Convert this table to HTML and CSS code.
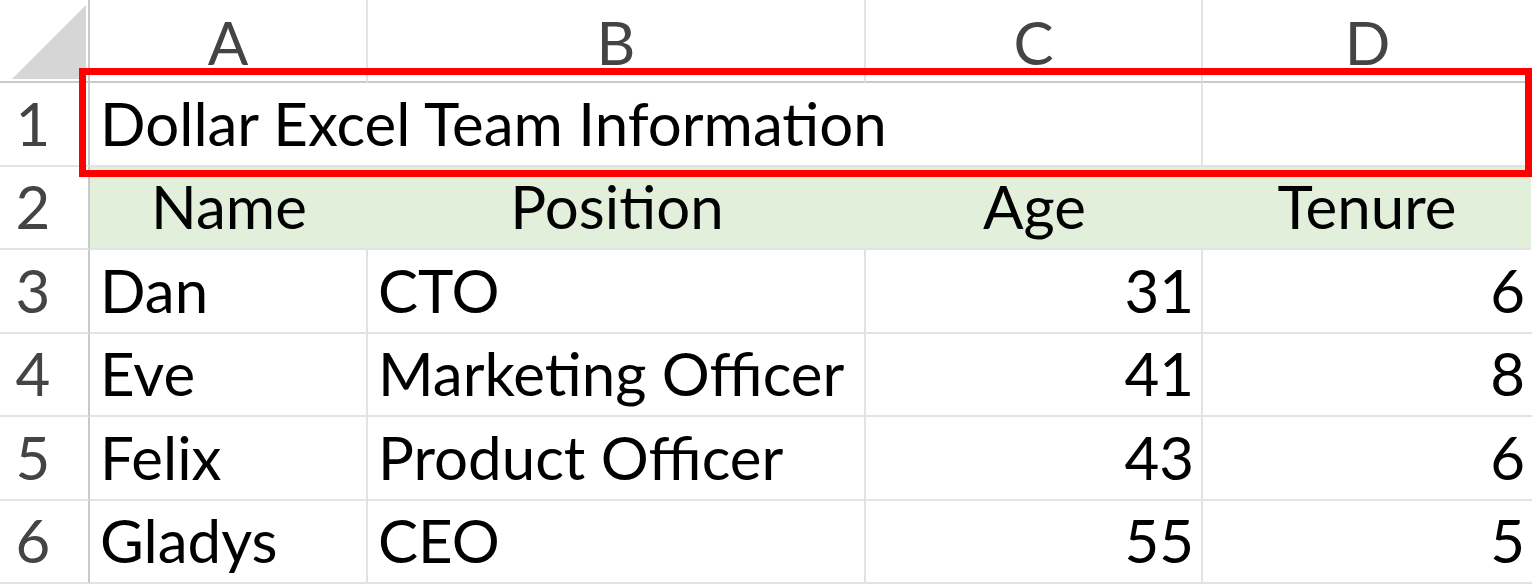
FILE: index.html
```html
<!DOCTYPE html>
<html>
<head>
<meta charset="utf-8">
<link rel="stylesheet" href="styles.css">
</head>
<body>
<div class="sheet">
  <div class="grid">
    <div class="corner"><svg class="tri" width="76" height="76" viewBox="0 0 76 76"><polygon points="1,75 75,1 75,75" fill="#d6d6d6"/></svg></div>
    <div class="colhead">A</div>
    <div class="colhead">B</div>
    <div class="colhead">C</div>
    <div class="colhead last">D</div>

    <div class="rowhead">1</div>
    <div class="cell title">Dollar Excel Team Information</div>
    <div class="cell last"></div>

    <div class="rowhead">2</div>
    <div class="cell hdr">Name</div>
    <div class="cell hdr">Position</div>
    <div class="cell hdr">Age</div>
    <div class="cell hdr last">Tenure</div>

    <div class="rowhead">3</div>
    <div class="cell">Dan</div>
    <div class="cell">CTO</div>
    <div class="cell num">31</div>
    <div class="cell num last">6</div>

    <div class="rowhead">4</div>
    <div class="cell">Eve</div>
    <div class="cell">Marketing Officer</div>
    <div class="cell num">41</div>
    <div class="cell num last">8</div>

    <div class="rowhead">5</div>
    <div class="cell">Felix</div>
    <div class="cell">Product Officer</div>
    <div class="cell num">43</div>
    <div class="cell num last">6</div>

    <div class="rowhead">6</div>
    <div class="cell">Gladys</div>
    <div class="cell">CEO</div>
    <div class="cell num">55</div>
    <div class="cell num last">5</div>
  </div>
  <div class="highlight"></div>
</div>
</body>
</html>
```

FILE: styles.css
```css
html, body {
  margin: 0;
  padding: 0;
  background: #ffffff;
}
.sheet {
  position: relative;
  width: 1536px;
  height: 587px;
  overflow: hidden;
  font-family: "Lato", "Liberation Sans", sans-serif;
  font-size: 60px;
  color: #000000;
}
.grid {
  display: grid;
  grid-template-columns: 90px 278px 498px 337px 329px;
  grid-template-rows: 83px repeat(6, 83.5px);
}
.grid > div {
  box-sizing: border-box;
  display: flex;
  align-items: flex-end;
  line-height: 1;
  white-space: nowrap;
}
.corner {
  border-right: 2px solid #c9c9c9;
  border-bottom: 2px solid #c9c9c9;
  align-items: flex-end;
  justify-content: flex-end;
  padding: 0 1px 1px 0;
}
.tri {
  display: block;
}
.colhead {
  justify-content: center;
  color: #444444;
  border-right: 2px solid #e3e3e3;
  border-bottom: 2px solid #c9c9c9;
  padding-bottom: 9px;
}
.rowhead {
  justify-content: center;
  color: #444444;
  padding-right: 22px;
  border-right: 2px solid #c9c9c9;
  border-bottom: 2px solid #e3e3e3;
  padding-bottom: 12px;
}
.cell {
  padding: 0 7px 12px 10px;
  border-right: 2px solid #e3e3e3;
  border-bottom: 2px solid #e3e3e3;
}
.cell.title {
  grid-column: span 3;
}
.cell.hdr {
  background: #e2efda;
  justify-content: center;
  border-right: none;
  padding-left: 0;
  padding-right: 0;
}
.cell.hdr.last {
  margin-right: 1px;
}
.cell.num {
  justify-content: flex-end;
}
.last {
  border-right: none !important;
}
.cell.num.last {
  padding-right: 7px;
}
.highlight {
  position: absolute;
  left: 79px;
  top: 68px;
  width: 1453px;
  height: 109px;
  box-sizing: border-box;
  border: 7px solid #ff0000;
}
```
